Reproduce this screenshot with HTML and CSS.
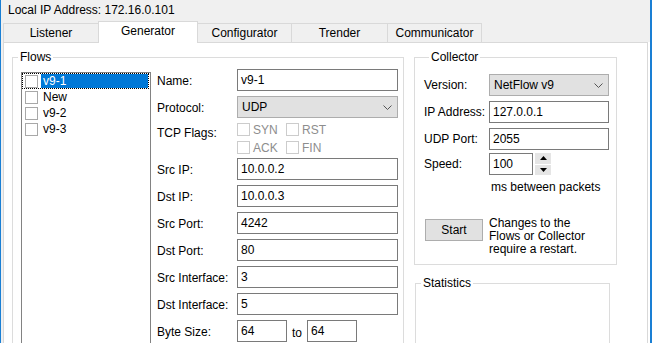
FILE: index.html
```html
<!DOCTYPE html>
<html lang="en">
<head>
    <meta charset="UTF-8">
    <title>Flow Generator</title>
    <link rel="stylesheet" href="styles.css">
</head>
<body>
    <div class="window">
        <div class="local-ip">Local IP Address: 172.16.0.101</div>

        <div class="tabs">
            <div class="tab tab-listener">Listener</div>
            <div class="tab tab-generator active">Generator</div>
            <div class="tab tab-configurator">Configurator</div>
            <div class="tab tab-trender">Trender</div>
            <div class="tab tab-communicator">Communicator</div>
        </div>

        <div class="page">
            <fieldset class="group flows">
                <legend>Flows</legend>
                <div class="flows-body">
                    <div class="listbox">
                        <div class="item selected"><span class="check"></span><span class="item-text">v9-1</span></div>
                        <div class="item"><span class="check"></span><span class="item-text">New</span></div>
                        <div class="item"><span class="check"></span><span class="item-text">v9-2</span></div>
                        <div class="item"><span class="check"></span><span class="item-text">v9-3</span></div>
                    </div>

                    <div class="fields">
                        <label>Name:</label>
                        <div class="textbox">v9-1</div>

                        <label>Protocol:</label>
                        <div class="combo">UDP
                            <svg width="9" height="5" viewBox="0 0 9 5"><polyline points="0.5,0.5 4.5,4.5 8.5,0.5" fill="none" stroke="#555" stroke-width="1"/></svg>
                        </div>

                        <label class="flags-label">TCP Flags:</label>
                        <div class="flags">
                            <span class="flag"><span class="check disabled"></span>SYN</span>
                            <span class="flag"><span class="check disabled"></span>RST</span>
                            <span class="flag"><span class="check disabled"></span>ACK</span>
                            <span class="flag"><span class="check disabled"></span>FIN</span>
                        </div>

                        <label>Src IP:</label>
                        <div class="textbox">10.0.0.2</div>

                        <label>Dst IP:</label>
                        <div class="textbox">10.0.0.3</div>

                        <label>Src Port:</label>
                        <div class="textbox">4242</div>

                        <label>Dst Port:</label>
                        <div class="textbox">80</div>

                        <label>Src Interface:</label>
                        <div class="textbox">3</div>

                        <label>Dst Interface:</label>
                        <div class="textbox">5</div>

                        <label>Byte Size:</label>
                        <div class="range">
                            <div class="textbox short">64</div>
                            <span class="to">to</span>
                            <div class="textbox short">64</div>
                        </div>
                    </div>
                </div>
            </fieldset>

            <div class="side">
                <fieldset class="group collector">
                    <legend>Collector</legend>
                    <div class="crow">
                        <label>Version:</label>
                        <div class="combo wide">NetFlow v9
                            <svg width="9" height="5" viewBox="0 0 9 5"><polyline points="0.5,0.5 4.5,4.5 8.5,0.5" fill="none" stroke="#555" stroke-width="1"/></svg>
                        </div>
                    </div>
                    <div class="crow">
                        <label>IP Address:</label>
                        <div class="textbox wide">127.0.0.1</div>
                    </div>
                    <div class="crow crow-tight">
                        <label>UDP Port:</label>
                        <div class="textbox wide">2055</div>
                    </div>
                    <div class="crow">
                        <label>Speed:</label>
                        <div class="textbox speed">100</div>
                        <div class="spin">
                            <span class="spin-btn"><svg width="7" height="4" viewBox="0 0 7 4"><polygon points="0,4 3.5,0 7,4" fill="#000"/></svg></span>
                            <span class="spin-btn"><svg width="7" height="4" viewBox="0 0 7 4"><polygon points="0,0 3.5,4 7,0" fill="#000"/></svg></span>
                        </div>
                    </div>
                    <div class="hint">ms between packets</div>
                    <div class="start-row">
                        <button class="btn">Start</button>
                        <p class="note">Changes to the<br>Flows or Collector<br>require a restart.</p>
                    </div>
                </fieldset>

                <fieldset class="group statistics">
                    <legend>Statistics</legend>
                </fieldset>
            </div>
        </div>
    </div>
</body>
</html>
```
FILE: styles.css
```css
body{
    margin: 0;
    background-color: #f0f0f0;
    font-family: "Liberation Sans", Arial, sans-serif;
    font-size: 12px;
    color: #000;
}
.window{
    height: 343px;
    overflow: hidden;
    border-left: 1px solid #1a7fd4;
    border-right: 2px solid #1a7fd4;
}
.local-ip{
    height: 21px;
    line-height: 21px;
    padding-left: 7px;
}

/* tab strip */
.tabs{
    display: flex;
    align-items: flex-end;
    height: 21px;
    margin-left: 2px;
}
.tab{
    box-sizing: border-box;
    height: 19px;
    margin-right: -1px;
    border: 1px solid #d9d9d9;
    border-bottom: 0;
    background-color: #f0f0f0;
    text-align: center;
    line-height: 18px;
}
.tab-listener{ width: 96px; }
.tab-generator{ width: 100px; }
.tab-configurator{ width: 95px; }
.tab-trender{ width: 97px; }
.tab-communicator{ width: 95px; }
.tab.active{
    position: relative;
    z-index: 1;
    height: 22px;
    margin-bottom: -1px;
    background-color: #fff;
    line-height: 19px;
}

.page{
    display: flex;
    align-items: flex-start;
    height: 320px;
    margin: 0 2px;
    border: 1px solid #d9d9d9;
    background-color: #fff;
    box-shadow: 2px 0 0 #fff;
}

/* group boxes */
.group{
    box-sizing: border-box;
    margin: 0;
    padding: 0;
    min-inline-size: 0;
    border: 1px solid #dcdcdc;
}
.group legend{
    margin-left: 5px;
    padding: 0 2px;
    line-height: 14px;
}
.flows{
    width: 392px;
    height: 340px;
    margin: 7px 0 0 8px;
}
.flows-body{
    display: flex;
    align-items: flex-start;
    padding-left: 8px;
}

/* checked list */
.listbox{
    box-sizing: border-box;
    width: 130px;
    height: 300px;
    margin-top: 8px;
    border: 1px solid #828282;
}
.item{
    display: flex;
    align-items: center;
    height: 16px;
    margin-right: 1px;
    padding-left: 3px;
}
.check{
    box-sizing: border-box;
    flex: none;
    width: 13px;
    height: 13px;
    border: 1px solid #a8a8a8;
    background-color: #fff;
}
.item-text{
    flex: 1;
    align-self: stretch;
    margin: 1px 1px 1px 3px;
    padding-left: 2px;
    line-height: 14px;
}
.item.selected{
    outline: 1px dotted #000;
    outline-offset: -1px;
}
.item.selected .item-text{
    background-color: #0078d7;
    color: #fff;
}

/* generator fields */
.fields{
    display: grid;
    grid-template-columns: 80px 161px;
    grid-template-rows: 22px 22px 30px repeat(7, 22px);
    row-gap: 5px;
    align-items: center;
    margin: 5px 0 0 6px;
}
.fields label{
    padding-top: 1px;
}
.textbox{
    box-sizing: border-box;
    height: 22px;
    padding: 0 3px;
    border: 1px solid #7a7a7a;
    background-color: #fff;
    line-height: 20px;
}
.combo{
    box-sizing: border-box;
    display: flex;
    justify-content: space-between;
    align-items: center;
    height: 22px;
    padding: 0 5px 0 4px;
    border: 1px solid #adadad;
    background-color: #e1e1e1;
}
.flags-label{
    align-self: start;
    line-height: 18px;
}
.flags{
    align-self: start;
    display: grid;
    grid-template-columns: 49px auto;
    row-gap: 5px;
}
.flag{
    display: flex;
    align-items: center;
    height: 13px;
    color: #8d8d8d;
}
.flag .check{
    margin-right: 3px;
}
.check.disabled{
    border-color: #cccccc;
}
.range{
    display: flex;
    align-items: flex-start;
}
.short{
    width: 50px;
}
.to{
    width: 20px;
    padding-top: 6px;
    text-align: center;
}

/* collector side */
.side{
    display: flex;
    flex-direction: column;
    align-items: flex-start;
    margin: 7px 0 0 10px;
}
.collector{
    width: 203px;
    padding: 10px 7px 8px 9px;
}
.crow{
    display: flex;
    align-items: center;
    height: 22px;
    margin-bottom: 5px;
}
.crow-tight{
    margin-bottom: 3px;
}
.crow label{
    width: 65px;
}
.wide{
    width: 120px;
}
.speed{
    width: 44px;
}
.spin{
    display: flex;
    flex-direction: column;
    gap: 1px;
    width: 16px;
    height: 22px;
    margin-left: 2px;
}
.spin-btn{
    display: flex;
    flex: 1;
    align-items: center;
    justify-content: center;
    background-color: #e5e5e5;
}
.hint{
    margin-top: 0;
    padding-left: 67px;
    line-height: 14px;
}
.start-row{
    display: flex;
    align-items: flex-start;
    margin-top: 23px;
}
.btn{
    box-sizing: border-box;
    width: 58px;
    height: 22px;
    margin: 2px 0 0 1px;
    border: 1px solid #adadad;
    background-color: #e1e1e1;
    font-family: "Liberation Sans", Arial, sans-serif;
    font-size: 12px;
    color: #000;
}
.note{
    margin: 0 0 0 6px;
    line-height: 13px;
}
.statistics{
    width: 195px;
    height: 100px;
    margin: 11px 0 0 1px;
}
```
